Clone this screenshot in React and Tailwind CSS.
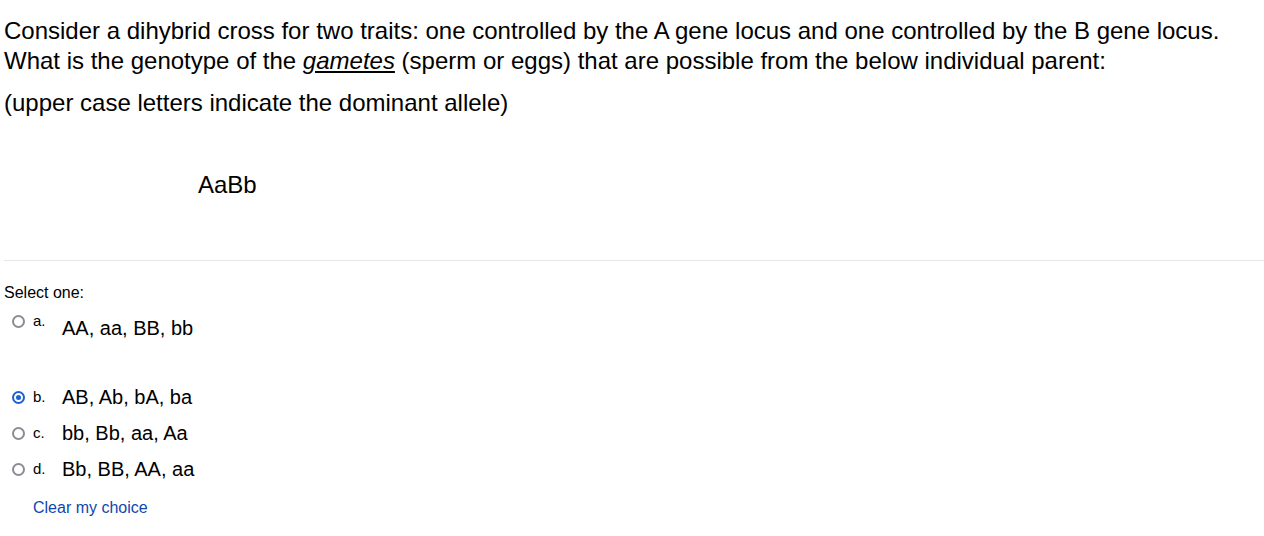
import React from "react";

function Radio({ checked }) {
  return (
    <span
      className={
        "flex items-center justify-center w-[13px] h-[13px] shrink-0 rounded-full border-2 bg-white " +
        (checked ? "border-[#1b61d1]" : "border-[#8b8b95]")
      }
    >
      {checked ? <span className="w-[5px] h-[5px] rounded-full bg-[#1b61d1]" /> : null}
    </span>
  );
}

function Option({ letter, text, checked }) {
  return (
    <div className="flex items-center h-[36px]">
      <Radio checked={checked} />
      <span className="ml-[8px] w-[29px] text-[15px] leading-[20px]">{letter}</span>
      <span className="text-[20px] leading-[24px]">{text}</span>
    </div>
  );
}

export default function App() {
  return (
    <div className="font-['Liberation_Sans',Arial,sans-serif] text-black bg-white w-[1264px] h-[536px] overflow-hidden">
      <div className="pl-[4px] pt-[16px] text-[24px] leading-[30px]">
        <p>
          Consider a dihybrid cross for two traits: one controlled by the A gene locus and one controlled by the B gene locus.
          <br />
          What is the genotype of the <span className="italic underline">gametes</span> (sperm or eggs) that are possible from the below individual parent:
        </p>
        <p className="mt-[12px]">(upper case letters indicate the dominant allele)</p>
        <p className="mt-[52px] pl-[194px]">AaBb</p>
      </div>
      <div className="ml-[4px] mt-[60px] h-px bg-[#e5e7eb]" />
      <div className="pl-[4px] mt-[22px] text-[16px] leading-[20px]">Select one:</div>
      <div className="pl-[12px]">
        <div className="flex items-start h-[76px]">
          <div className="mt-[12px]"><Radio /></div>
          <span className="ml-[8px] w-[29px] mt-[8px] text-[15px] leading-[20px]">a.</span>
          <span className="mt-[13px] text-[20px] leading-[24px]">AA, aa, BB, bb</span>
        </div>
        <Option letter="b." text="AB, Ab, bA, ba" checked />
        <Option letter="c." text="bb, Bb, aa, Aa" />
        <Option letter="d." text="Bb, BB, AA, aa" />
        <div className="mt-[11px] ml-[21px] text-[16px] leading-[20px] text-[#0f47ad]">Clear my choice</div>
      </div>
    </div>
  );
}
